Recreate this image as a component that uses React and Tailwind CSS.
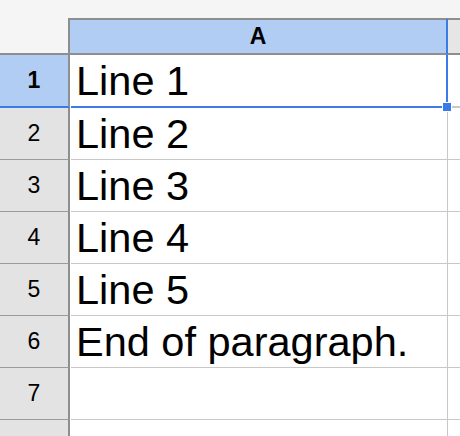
import React from 'react';

const rows = ['Line 1', 'Line 2', 'Line 3', 'Line 4', 'Line 5', 'End of paragraph.', '', ''];

export default function App() {
  return (
    <div className="relative w-[460px] h-[436px] overflow-hidden bg-white text-black" style={{ fontFamily: '"Liberation Sans", Arial, sans-serif' }}>
      {/* top strip */}
      <div className="h-[18px] bg-[#f5f5f5]" />

      {/* column header */}
      <div className="flex h-[37px]">
        <div className="w-[70px] shrink-0 bg-[#f5f5f5] border-r-2 border-b-2 border-[#8e8e8e]" />
        <div className="w-[378px] shrink-0 flex items-center justify-center bg-[#b1cdf4] border-t-2 border-b-2 border-[#8e8e8e] border-r-2 border-r-[#3b7be9] text-[23px] font-bold">
          A
        </div>
        <div className="flex-1 bg-[#e6e6e6] border-t-2 border-b-2 border-[#8e8e8e]" />
      </div>

      {/* data rows */}
      {rows.map((text, i) => {
        const first = i === 0;
        return (
          <div key={i} className={`flex ${first ? 'h-[53px]' : 'h-[52px]'}`}>
            <div className={`w-[70px] shrink-0 flex items-center justify-center border-r-2 border-r-[#8e8e8e] text-[23px] ${first ? 'bg-[#b1cdf4] font-bold border-b-2 border-b-[#3b7be9]' : 'bg-[#e3e3e3] border-b border-b-[#9a9a9a]'}`}>
              {i < 7 ? i + 1 : ''}
            </div>
            <div className="w-[378px] shrink-0 pl-px">
              <div className={`h-full pl-[5px] flex items-center text-[41.5px] leading-none whitespace-nowrap ${first ? 'border-b-2 border-r-2 border-[#3b7be9]' : 'border-b border-r border-[#c8c8c8]'}`}>
                {text}
              </div>
            </div>
            <div className={`flex-1 ${first ? 'border-b-2' : 'border-b'} border-[#c8c8c8]`} />
          </div>
        );
      })}

      {/* fill handle */}
      <div className="absolute left-[442px] top-[102px] w-[10px] h-[10px] bg-[#3b7be9] border border-white" />
    </div>
  );
}
